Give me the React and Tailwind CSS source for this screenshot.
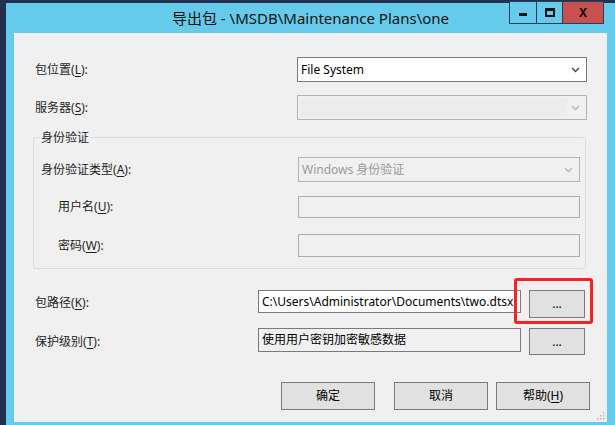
import React from 'react';

const FONT = {
  fontFamily: '"Segoe UI", "Noto Sans", "Noto Sans CJK SC", sans-serif',
};

function Chevron({ disabled }) {
  return (
    <svg width="9" height="6" viewBox="0 0 9 6" className="shrink-0">
      <polyline
        points="1,1 4.5,4.5 8,1"
        fill="none"
        stroke={disabled ? '#b4b4b4' : '#444'}
        strokeWidth="1.3"
      />
    </svg>
  );
}

function Label({ text, hotkey, className = '' }) {
  return (
    <span className={`text-[12px] text-[#1e1e1e] whitespace-nowrap ${className}`}>
      {text}(<span className="underline underline-offset-2">{hotkey}</span>):
    </span>
  );
}

function Select({ value, disabled, className = '' }) {
  return (
    <div
      className={`flex items-center justify-between border pl-[3px] pr-[6px] ${
        disabled ? 'border-[#b4b4b4] bg-[#f0f0f0]' : 'border-[#7a7a7a] bg-white'
      } ${className}`}
    >
      <span className={`text-[12px] ${disabled ? 'text-[#9a9a9a]' : 'text-black'}`}>{value}</span>
      <Chevron disabled={disabled} />
    </div>
  );
}

function Button({ children, className = '' }) {
  return (
    <div
      className={`flex items-center justify-center border border-[#7a7a7a] bg-[#e1e1e1] text-[12px] text-black ${className}`}
    >
      {children}
    </div>
  );
}

export default function App() {
  return (
    <div className="w-[615px] h-[425px] overflow-hidden bg-[#22314d] pt-[3px] pl-[6px]" style={FONT}>
      <div className="relative flex h-[422px] flex-col bg-[#66cbea] pl-[8px]">
        {/* title bar */}
        <div className="flex h-[30px] items-center justify-center pr-[8px]">
          <span className="text-[15px] text-[#111]">导出包 - \MSDB\Maintenance Plans\one</span>
        </div>
        <div className="absolute right-[11px] top-[-2px] flex h-[23px] border border-[#2b3a55]">
          <div className="flex w-[27px] items-center justify-center border-r border-[#2b3a55] bg-[#66cbea]">
            <div className="mt-[4px] h-[3px] w-[8px] bg-[#111]" />
          </div>
          <div className="flex w-[26px] items-center justify-center border-r border-[#2b3a55] bg-[#66cbea]">
            <div className="h-[9px] w-[10px] border-2 border-t-[3px] border-[#111]" />
          </div>
          <div className="flex w-[40px] items-center justify-center bg-[#c75050] text-[12px] font-bold text-[#111]">
            X
          </div>
        </div>

        {/* content */}
        <div className="relative h-[389px] w-[593px] bg-[#f0f0f0]">
          <div className="flex flex-col pt-[24px]">
            <div className="flex items-center pl-[21px]">
              <Label text="包位置" hotkey="L" className="w-[262px]" />
              <Select value="File System" className="h-[25px] w-[290px]" />
            </div>
            <div className="mt-[13px] flex items-center pl-[21px]">
              <Label text="服务器" hotkey="S" className="w-[262px]" />
              <div className="flex h-[25px] w-[290px] items-center justify-between border border-[#b4b4b4] bg-[#f0f0f0] p-[2px] pr-[6px]">
                <div className="h-full w-[267px] bg-[#ececec]" />
                <Chevron disabled />
              </div>
            </div>

            {/* group box */}
            <div className="relative ml-[19px] mt-[17px] h-[132px] w-[553px] rounded-[3px] border border-[#d3dde3]">
              <span className="absolute left-[6px] top-[-9px] bg-[#f0f0f0] px-[1px] text-[12px] text-[#1e1e1e]">
                身份验证
              </span>
              <div className="mt-[19px] flex items-center pl-[7px]">
                <Label text="身份验证类型" hotkey="A" className="w-[257px]" />
                <Select value="Windows 身份验证" disabled className="h-[25px] w-[282px]" />
              </div>
              <div className="mt-[14px] flex items-center pl-[24px]">
                <Label text="用户名" hotkey="U" className="w-[240px]" />
                <div className="h-[22px] w-[282px] border border-[#adadad] bg-[#f0f0f0]" />
              </div>
              <div className="mt-[16px] flex items-center pl-[24px]">
                <Label text="密码" hotkey="W" className="w-[240px]" />
                <div className="h-[23px] w-[282px] border border-[#adadad] bg-[#f0f0f0]" />
              </div>
            </div>

            <div className="mt-[21px] flex items-start pl-[21px]">
              <Label text="包路径" hotkey="K" className="mt-[4px] w-[223px]" />
              <div className="flex h-[23px] w-[263px] items-center overflow-hidden whitespace-nowrap border border-[#7a7a7a] bg-white pl-[3px] text-[12px] text-black">
                C:\Users\Administrator\Documents\two.dtsx
              </div>
              <Button className="ml-[8px] h-[28px] w-[56px] border-[#3c7fb1]">...</Button>
            </div>
            <div className="mt-[10px] flex items-start pl-[21px]">
              <Label text="保护级别" hotkey="T" className="mt-[5px] w-[223px]" />
              <div className="flex h-[24px] w-[263px] items-center border border-[#7a7a7a] bg-[#f0f0f0] pl-[3px] text-[12px] text-black">
                使用用户密钥加密敏感数据
              </div>
              <Button className="ml-[8px] h-[27px] w-[56px]">...</Button>
            </div>

            <div className="mt-[27px] flex pl-[267px]">
              <Button className="h-[28px] w-[94px]">确定</Button>
              <Button className="ml-[19px] h-[28px] w-[94px]">取消</Button>
              <Button className="ml-[8px] h-[28px] w-[94px]">
                帮助(<span className="underline underline-offset-2">H</span>)
              </Button>
            </div>
          </div>

          {/* red highlight */}
          <div className="absolute left-[500px] top-[245px] h-[46px] w-[79px] rounded-[3px] border-[3px] border-[#f52222]" />

          {/* size grip */}
          <svg className="absolute bottom-[2px] right-[2px]" width="8" height="8" viewBox="0 0 8 8">
            <rect x="6" y="0" width="1.5" height="1.5" fill="#b8b8b8" />
            <rect x="3" y="3" width="1.5" height="1.5" fill="#b8b8b8" />
            <rect x="6" y="3" width="1.5" height="1.5" fill="#b8b8b8" />
            <rect x="0" y="6" width="1.5" height="1.5" fill="#b8b8b8" />
            <rect x="3" y="6" width="1.5" height="1.5" fill="#b8b8b8" />
            <rect x="6" y="6" width="1.5" height="1.5" fill="#b8b8b8" />
          </svg>
        </div>
      </div>
    </div>
  );
}
